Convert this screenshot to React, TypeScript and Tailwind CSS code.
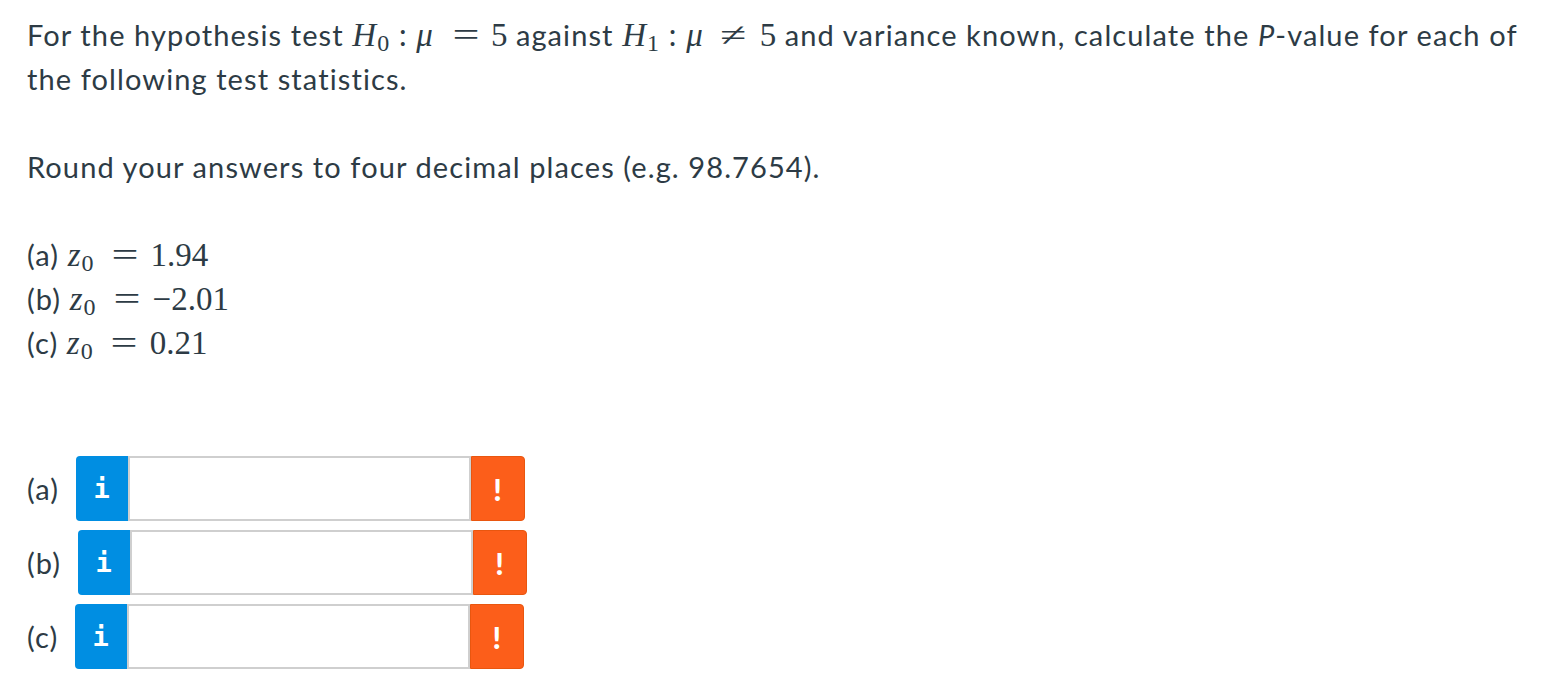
import React from "react";

const mathFont = { fontFamily: '"Liberation Serif", "Times New Roman", serif' };

function M({ children }: { children: React.ReactNode }) {
  return (
    <span className="text-[33px] leading-none tracking-normal" style={mathFont}>
      {children}
    </span>
  );
}

function Sub({ children }: { children: React.ReactNode }) {
  return <sub className="relative top-[5px] ml-[1px] align-baseline text-[24px] leading-none">{children}</sub>;
}

function Rel({ children, className }: { children: React.ReactNode; className: string }) {
  return (
    <span className={`inline-block w-[22px] scale-x-[1.45] text-center ${className}`}>{children}</span>
  );
}

function Equation({ label, value }: { label: string; value: string }) {
  return (
    <p>
      {label}{" "}
      <M>
        <i>z</i>
        <Sub>0</Sub>
        <Rel className="ml-[20px] mr-[15px]">=</Rel>
        {value}
      </M>
    </p>
  );
}

function AnswerRow({ label }: { label: string }) {
  return (
    <div className="flex items-center gap-[17px]">
      <span>{label}</span>
      <div className="flex h-[65px]">
        <div className="flex w-[52px] items-center justify-center rounded-l-[4px] bg-[#008ee2]">
          <span
            className="text-[27px] font-bold leading-none text-white"
            style={{ fontFamily: '"DejaVu Sans Mono", "Liberation Mono", monospace' }}
          >
            i
          </span>
        </div>
        <input
          type="text"
          className="w-[343px] border-2 border-[#cfcfcf] bg-white outline-none"
        />
        <div className="flex w-[54px] items-center justify-center rounded-r-[4px] border border-[#e9560f] bg-[#fc5e1a]">
          <span className="text-[30px] font-black leading-none text-white">!</span>
        </div>
      </div>
    </div>
  );
}

export default function App() {
  return (
    <div
      className="min-h-screen bg-white pl-[27px] pr-[20px] pt-[13px] text-[29px] leading-[44px] tracking-[1.1px] text-[#2d3b45]"
      style={{ fontFamily: 'Lato, "Open Sans", sans-serif' }}
    >
      <p>
        For the hypothesis test{" "}
        <M>
          <i>H</i>
          <Sub>0</Sub>
          <span className="mx-[9px]">:</span>
          <i>μ</i>
          <Rel className="ml-[22px] mr-[14px]">=</Rel>5
        </M>{" "}
        against{" "}
        <M>
          <i>H</i>
          <Sub>1</Sub>
          <span className="mx-[9px]">:</span>
          <i>μ</i>
          <Rel className="ml-[19px] mr-[16px]">≠</Rel>5
        </M>{" "}
        and variance known, calculate the <i>P</i>-value for each of the following test
        statistics.
      </p>

      <p className="mt-[44px]">Round your answers to four decimal places (e.g. 98.7654).</p>

      <div className="mt-[44px]">
        <Equation label="(a)" value="1.94" />
        <Equation label="(b)" value="−2.01" />
        <Equation label="(c)" value="0.21" />
      </div>

      <div className="mt-[91px] flex flex-col gap-[9px]">
        <AnswerRow label="(a)" />
        <AnswerRow label="(b)" />
        <AnswerRow label="(c)" />
      </div>
    </div>
  );
}
